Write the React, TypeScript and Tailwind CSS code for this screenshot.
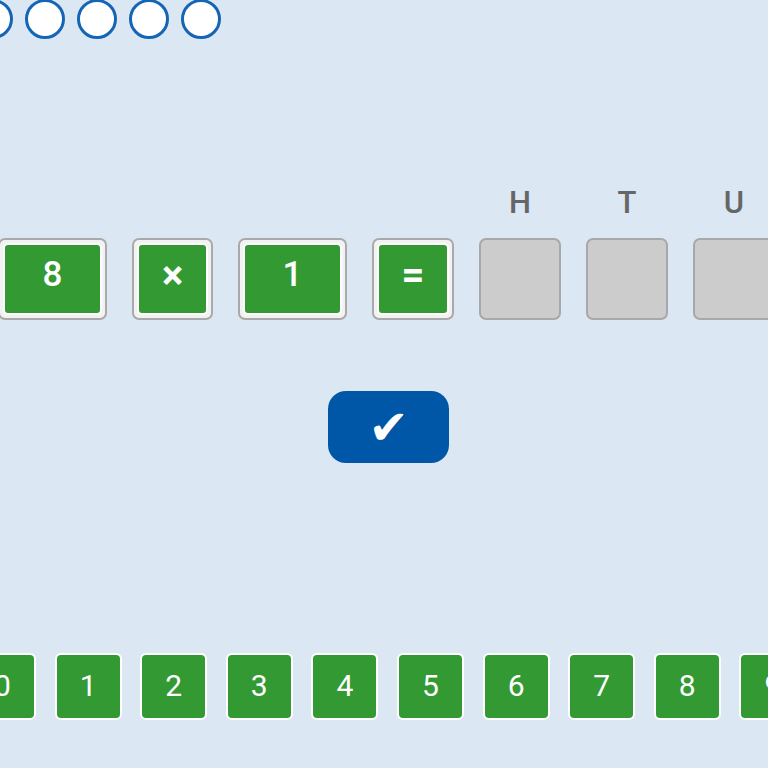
import React from "react";

const eq = [
  { t: "8", w: "w-[109px]", kind: "g", size: "text-[35px] font-medium pb-[9px]" },
  { t: "×", w: "w-[81px]", kind: "g", size: "text-[40px] font-bold pb-[6px]" },
  { t: "1", w: "w-[109px]", kind: "g", size: "text-[35px] font-medium pb-[9px]" },
  { t: "=", w: "w-[82px]", kind: "g", size: "text-[40px] font-bold pb-[8px]" },
  { t: "H", w: "w-[82px]", kind: "e" },
  { t: "T", w: "w-[82px]", kind: "e" },
  { t: "U", w: "w-[82px]", kind: "e" },
];

export default function App() {
  return (
    <div
      className="w-[768px] h-[768px] overflow-hidden bg-[#dbe8f4] flex flex-col"
      style={{ fontFamily: "Roboto, 'Liberation Sans', sans-serif" }}
    >
      <div className="flex gap-[12px] ml-[-27px] mt-[-1px] shrink-0">
        {[0, 1, 2, 3, 4].map((i) => (
          <div
            key={i}
            className="w-[40px] h-[40px] rounded-full bg-white border-[3px] border-[#1565b5] shrink-0"
          />
        ))}
      </div>

      <div className="flex gap-[25px] ml-[-2px] mt-[146px] shrink-0 items-end">
        {eq.map((e, i) => (
          <div key={i} className={`flex flex-col items-center shrink-0 ${e.w}`}>
            {e.kind === "e" ? (
              <>
                <div className="h-[36px] leading-[36px] text-[31px] font-medium text-[#666666] mb-[17px]">
                  {e.t}
                </div>
                <div className="w-full h-[82px] rounded-[7px] bg-[#cccccc] border-2 border-[#a8a8a8]" />
              </>
            ) : (
              <div className="w-full h-[82px] rounded-[7px] border-2 border-[#a9a9a9] bg-[#f2f2f2] p-[3px]">
                <div
                  className={`w-full h-full rounded-[5px] bg-[#339933] border-2 border-white flex items-center justify-center text-white leading-none ${e.size}`}
                >
                  {e.t}
                </div>
              </div>
            )}
          </div>
        ))}
      </div>

      <div className="flex justify-center mt-[71px] ml-[9px] shrink-0">
        <div
          className="w-[121px] h-[72px] rounded-[18px] bg-[#0057a8] flex items-center justify-center text-white text-[48px] leading-none"
          style={{ fontFamily: "'DejaVu Sans', sans-serif" }}
        >
          ✔
        </div>
      </div>

      <div className="flex gap-[18.6px] ml-[-31px] mt-[190px] shrink-0">
        {[0, 1, 2, 3, 4, 5, 6, 7, 8, 9].map((d) => (
          <div
            key={d}
            className="w-[67px] h-[67px] shrink-0 rounded-[6px] bg-[#339933] border-2 border-white flex items-center justify-center text-white text-[30px] pb-[3px]"
          >
            {d}
          </div>
        ))}
      </div>
    </div>
  );
}
